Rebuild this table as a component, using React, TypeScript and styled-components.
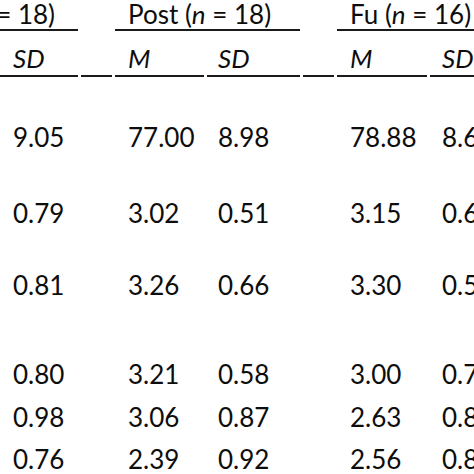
import React from "react";
import styled, { createGlobalStyle } from "styled-components";

const Global = createGlobalStyle`
  html, body { margin: 0; padding: 0; background: #ffffff; }
  body { font-family: Lato, "Open Sans", "Liberation Sans", sans-serif; }
`;

const Viewport = styled.div`
  width: 474px;
  height: 474px;
  overflow: hidden;
  background: #ffffff;
`;

const Table = styled.div`
  display: grid;
  grid-template-columns: 78px 31px 89px 93px 31px 90px 60px;
  column-gap: 3px;
  margin-top: -1px;
  color: #0d0d0d;
  font-size: 26px;
  line-height: 30px;
`;

const GroupHead = styled.div<{ $span: number; $clip?: boolean }>`
  grid-column: span ${(p) => p.$span};
  display: flex;
  justify-content: ${(p) => (p.$clip ? "flex-end" : "flex-start")};
  padding: 0 ${(p) => (p.$clip ? "23px" : "0")} 0 ${(p) => (p.$clip ? "0" : "13px")};
  border-bottom: 2px solid #1a1a1a;
  white-space: nowrap;
  overflow: visible;
`;

const Blank = styled.div``;

const ColHead = styled.div<{ $pad: number; $rule: boolean }>`
  padding: 12px 0 1.5px ${(p) => p.$pad}px;
  border-bottom: 2px solid ${(p) => (p.$rule ? "#1a1a1a" : "transparent")};
  font-style: italic;
  white-space: nowrap;
`;

const Cell = styled.div<{ $pad: number; $top: number }>`
  padding: ${(p) => p.$top}px 0 0 ${(p) => p.$pad}px;
  white-space: nowrap;
  overflow: visible;
`;

const Em = styled.span`
  font-style: italic;
`;

const pads = [13, 0, 13, 11, 0, 13, 12];

const rows: { top: number; v: string[] }[] = [
  { top: 45.5, v: ["9.05", "", "77.00", "8.98", "", "78.88", "8.64"] },
  { top: 46, v: ["0.79", "", "3.02", "0.51", "", "3.15", "0.65"] },
  { top: 42, v: ["0.81", "", "3.26", "0.66", "", "3.30", "0.54"] },
  { top: 59, v: ["0.80", "", "3.21", "0.58", "", "3.00", "0.76"] },
  { top: 13, v: ["0.98", "", "3.06", "0.87", "", "2.63", "0.82"] },
  { top: 11.5, v: ["0.76", "", "2.39", "0.92", "", "2.56", "0.86"] },
];

const heads = ["SD", "", "M", "SD", "", "M", "SD"];

export default function App() {
  return (
    <Viewport>
      <Global />
      <Table>
        <GroupHead $span={1} $clip>
          <span>
            Pre (<Em>n</Em> = 18)
          </span>
        </GroupHead>
        <Blank />
        <GroupHead $span={2}>
          <span>
            Post (<Em>n</Em> = 18)
          </span>
        </GroupHead>
        <Blank />
        <GroupHead $span={2}>
          <span>
            Fu (<Em>n</Em> = 16)
          </span>
        </GroupHead>

        {heads.map((h, i) => (
          <ColHead key={"h" + i} $pad={pads[i]} $rule>
            {h}
          </ColHead>
        ))}

        {rows.map((r, ri) =>
          r.v.map((val, ci) => (
            <Cell key={ri + "-" + ci} $pad={pads[ci]} $top={r.top}>
              {val}
            </Cell>
          ))
        )}
      </Table>
    </Viewport>
  );
}
